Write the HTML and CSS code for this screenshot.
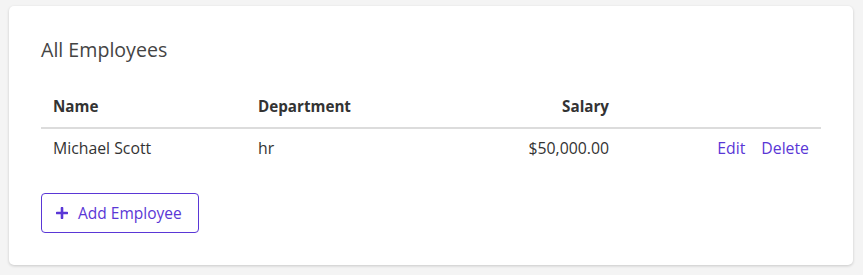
FILE: index.html
```html
<!DOCTYPE html>
<html>
<head>
<meta charset="utf-8">
<link rel="stylesheet" href="styles.css">
</head>
<body>
<div class="page">
  <div class="card">
    <h2 class="title">All Employees</h2>
    <table class="table">
      <colgroup>
        <col class="c1"><col class="c2"><col class="c3"><col class="c4">
      </colgroup>
      <thead>
        <tr>
          <th>Name</th>
          <th>Department</th>
          <th class="right">Salary</th>
          <th></th>
        </tr>
      </thead>
      <tbody>
        <tr>
          <td>Michael Scott</td>
          <td>hr</td>
          <td class="right">$50,000.00</td>
          <td class="right actions"><a class="link">Edit</a><a class="link">Delete</a></td>
        </tr>
      </tbody>
    </table>
    <button class="btn"><svg class="plus" width="12" height="12" viewBox="0 0 12 12"><path d="M6 1v10M1 6h10" stroke="currentColor" stroke-width="2.6" stroke-linecap="round"/></svg>Add Employee</button>
  </div>
</div>
</body>
</html>
```
FILE: styles.css
```css
html, body { margin: 0; padding: 0; }
body {
  background: #f4f4f4;
  font-family: "Open Sans", "Noto Sans", sans-serif;
  color: #3a3a3a;
}
.page { padding: 6px 10px 10px 9px; }
.card {
  background: #fff;
  border-radius: 5px;
  box-shadow: 0 1px 3px rgba(0,0,0,0.18);
  padding: 31px 32px 31px 32px;
  height: 197px;
}
.title {
  margin: 0;
  font-weight: 400;
  font-size: 19.6px;
  line-height: 26px;
  color: #444;
}
.table {
  width: 780px;
  border-collapse: collapse;
  table-layout: fixed;
  margin-top: 22px;
}
.c1 { width: 205px; }
.c2 { width: 175px; }
.c3 { width: 200px; }
.c4 { width: 200px; }
th {
  text-align: left;
  font-weight: 700;
  font-size: 15.2px;
  padding: 11px 12px 11px 12px;
  border-bottom: 2px solid #dcdcdc;
  color: #333;
  line-height: 20px;
}
td {
  font-size: 15.8px;
  padding: 8px 12px 10px;
  line-height: 22px;
  color: #333;
}
.right { text-align: right; }
.link { color: #5a37d6; margin-left: 16px; cursor: pointer; }
.btn {
  margin-top: 24px;
  display: flex;
  align-items: center;
  gap: 10px;
  height: 40px;
  width: 158px;
  padding: 0 14px;
  background: #fff;
  border: 1px solid #5a37d6;
  border-radius: 4px;
  color: #5a37d6;
  font-family: inherit;
  font-size: 15.5px;
}
.plus { flex: none; }
```
